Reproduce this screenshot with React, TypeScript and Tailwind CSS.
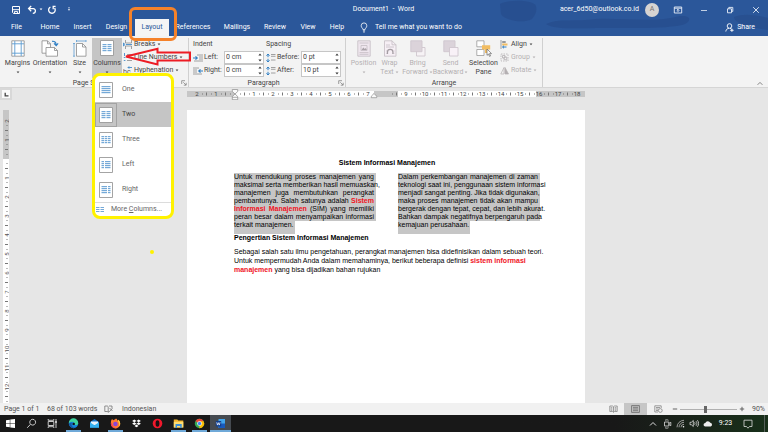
import { ReactNode } from "react";

const tabs = [
  { name: "File", width: "w-[33px]" },
  { name: "Home", width: "w-[34px]" },
  { name: "Insert", width: "w-[31px]" },
  { name: "Design", width: "w-[37px]" },
  { name: "Layout", width: "w-[34px]" },
  { name: "References", width: "w-[48px]" },
  { name: "Mailings", width: "w-[40px]" },
  { name: "Review", width: "w-[36px]" },
  { name: "View", width: "w-[30px]" },
  { name: "Help", width: "w-[28px]" },
];

const columnOptions = [
  { name: "One", cols: [[2.5, 9]] },
  { name: "Two", cols: [[2.5, 4], [7.5, 4]] },
  { name: "Three", cols: [[2.4, 2.6], [5.7, 2.6], [9, 2.6]] },
  { name: "Left", cols: [[2.5, 2.5], [6, 5.5]] },
  { name: "Right", cols: [[2.5, 5.5], [9, 2.5]] },
];

const leftColumn: ReactNode[] = [
  "Untuk mendukung proses manajemen yang",
  "maksimal serta memberikan hasil memuaskan,",
  "manajemen juga membutuhkan perangkat",
  <>
    pembantunya. Salah satunya adalah <Red>Sistem</Red>
  </>,
  <>
    <Red>Informasi Manajemen</Red> (SIM) yang memiliki
  </>,
  "peran besar dalam menyampaikan informasi",
];

const rightColumn: ReactNode[] = [
  "Dalam perkembangan manajemen di zaman",
  "teknologi saat ini, penggunaan sistem informasi",
  "menjadi sangat penting. Jika tidak digunakan,",
  "maka proses manajemen tidak akan mampu",
  "bergerak dengan tepat, cepat, dan lebih akurat.",
  "Bahkan dampak negatifnya berpengaruh pada",
];

function Red({ children }: { children: ReactNode }) {
  return <b className="text-[#f0141e]">{children}</b>;
}

function Caret() {
  return (
    <svg viewBox="0 0 4 3" className="inline-block w-[4px] h-[3px] shrink-0">
      <path d="M0.6 0.6h2.8L2 2.2z" fill="currentColor" />
    </svg>
  );
}

/* ---------- title bar ---------- */

function TitleBar() {
  return (
    <div className="relative flex items-center h-[19px] text-white">
      <div className="flex-1 flex items-center pl-[11px]">
        <button aria-label="Save" className="w-[10px]">
          <svg viewBox="0 0 10 10" className="w-[10px] h-[10px]" fill="none" stroke="#fff">
            <path d="M1.5 1.5h7v7h-6l-1-1z" />
            <path d="M2 4.7h6M3.4 8.5V6.6h3.2v1.9" />
          </svg>
        </button>
        <button aria-label="Undo" className="ml-[6px] w-[10px]">
          <svg viewBox="0 0 10 10" className="w-[10px] h-[10px]" fill="none" stroke="#fff" strokeWidth="1.3">
            <path d="M4.2 1 1.6 3.6l2.6 2.6M1.8 3.6h4.4c3 0 3 4.8-.4 4.8" />
          </svg>
        </button>
        <button aria-label="Undo history" className="ml-[2px] flex">
          <Caret />
        </button>
        <button aria-label="Redo" className="ml-[4px] w-[10px]">
          <svg viewBox="0 0 10 10" className="w-[10px] h-[10px]" fill="none" stroke="#fff" strokeWidth="1.3">
            <path d="M3.4 2A3.3 3.3 0 1 0 7.6 3M8.6 1.4H6.2v2.8" />
          </svg>
        </button>
        <button aria-label="Customize toolbar" className="ml-[10px] flex">
          <svg viewBox="0 0 4 5" className="w-[4px] h-[5px]">
            <path d="M1 .8h2" stroke="#fff" strokeWidth=".6" />
            <path d="M.8 2.2h2.400L2 3.800z" fill="#fff" />
          </svg>
        </button>
      </div>
      <h1 className="font-normal pr-[4px]">Document1&nbsp; -&nbsp; Word</h1>
      <div className="flex-1 flex items-center justify-end pr-[8px]">
        <span>acer_6d50@outlook.co.id</span>
        <span className="ml-[6px] w-[14px] h-[14px] rounded-full bg-[#d6d4d2] text-[#77726e] flex items-center justify-center">
          A
        </span>
        <button aria-label="Ribbon display options" className="ml-[14px]">
          <svg viewBox="0 0 10 8" className="w-[10px] h-[8px]" fill="none" stroke="#e8eef8" strokeWidth=".9">
            <path d="M1.3 1h7.4v6H1.3zM1.3 2.2h7.4M5 6V3.4M3.7 4.6 5 3.3l1.3 1.3" />
          </svg>
        </button>
        <button aria-label="Minimize" className="ml-[17px]">
          <svg viewBox="0 0 8 8" className="w-[8px] h-[8px]" stroke="#e8eef8" strokeWidth=".8">
            <path d="M1 4.5h6" />
          </svg>
        </button>
        <button aria-label="Restore" className="ml-[18px]">
          <svg viewBox="0 0 8 8" className="w-[8px] h-[8px]" fill="none" stroke="#e8eef8" strokeWidth=".9">
            <path d="M1.5 2.8h4v4h-4zM2.8 2.8V1.4h4v4H5.5" />
          </svg>
        </button>
        <button aria-label="Close" className="ml-[18px]">
          <svg viewBox="0 0 8 8" className="w-[8px] h-[8px]" stroke="#e8eef8" strokeWidth=".9">
            <path d="m1.2 1.2 5.6 5.6M6.8 1.2 1.2 6.8" />
          </svg>
        </button>
      </div>
    </div>
  );
}

function TabBar() {
  return (
    <div className="relative flex items-stretch h-[17px] text-white">
      {tabs.map((tab) => (
        <button
          key={tab.name}
          className={`${tab.width} shrink-0 text-center ${
            tab.name === "Layout" ? "bg-[#f5f5f5] text-[#2b579a]" : ""
          }`}
        >
          {tab.name}
        </button>
      ))}
      <label htmlFor="tell-me" className="flex items-center pl-[9px]">
        <svg viewBox="0 0 8 11" className="w-[8px] h-[11px]" fill="none" stroke="#fff" strokeWidth=".8">
          <path d="M2.8 7.4C2.6 6 1.2 5.6 1.2 3.7a2.8 2.8 0 0 1 5.6 0c0 1.900-1.400 2.300-1.600 3.700zM2.900 8.800h2.200M3.200 10h1.600" />
        </svg>
      </label>
      <input
        id="tell-me"
        className="ml-[7px] w-[120px] placeholder:text-white outline-none"
        placeholder="Tell me what you want to do"
      />
      <button className="ml-auto mr-[13px] flex items-center gap-[3px]">
        <svg viewBox="0 0 9 9" className="w-[9px] h-[9px]" fill="none" stroke="#fff" strokeWidth=".9">
          <circle cx="4.500" cy="3" r="2.300" />
          <path d="M.8 8.500c.3-2 1.500-3.100 3.200-3.300M5 5.200c1 .2 1.700.8 2 1.400M5.200 7.300h3.400M6.900 5.700v3.200" />
        </svg>
        Share
      </button>
    </div>
  );
}

/* ---------- ribbon ---------- */

function RibbonGroup({
  title,
  launcher,
  className,
  children,
}: {
  title: string;
  launcher?: boolean;
  className: string;
  children: ReactNode;
}) {
  return (
    <section className={`flex flex-col shrink-0 mt-[2px] border-r border-[#d0d0d0] ${className}`}>
      <div className="flex shrink-0 h-[40px]">{children}</div>
      <div className="flex shrink-0 items-center h-[10px] text-[#444]">
        <span className="flex-1 text-center">{title}</span>
        {launcher && (
          <button aria-label={`${title} settings`} className="mr-[1px]">
            <svg viewBox="0 0 6 6" className="w-[6px] h-[6px]" fill="none" stroke="#777" strokeWidth=".7">
              <path d="M.7 4V.7H4M2.300 2.300l2.600 2.600M5.200 2.800v2.400H2.800" />
            </svg>
          </button>
        )}
      </div>
    </section>
  );
}

function BigButton({
  lines,
  icon,
  className,
  caret = "none",
  disabled,
}: {
  lines: string[];
  icon: ReactNode;
  className: string;
  caret?: "below" | "inline" | "none";
  disabled?: boolean;
}) {
  return (
    <button
      disabled={disabled}
      className={`flex flex-col items-center shrink-0 pt-[2px] leading-[9px] whitespace-nowrap ${
        disabled ? "text-[#b4b0b2]" : "text-[#444]"
      } ${className}`}
    >
      <span className="h-[18px] mb-[1px]">{icon}</span>
      {lines.map((line, i) => (
        <span key={line} className="flex items-center gap-[1px]">
          {line}
          {caret === "inline" && i === lines.length - 1 && <Caret />}
        </span>
      ))}
      {caret === "below" && (
        <span className="flex items-center h-[8px]">
          <Caret />
        </span>
      )}
    </button>
  );
}

function SmallButton({ label, icon, disabled }: { label: string; icon: ReactNode; disabled?: boolean }) {
  return (
    <button
      disabled={disabled}
      className={`flex items-center h-[13px] gap-[2px] whitespace-nowrap ${disabled ? "text-[#b4b0b2]" : "text-[#444]"}`}
    >
      {icon}
      {label}
      <Caret />
    </button>
  );
}

function Field({
  id,
  label,
  value,
  icon,
  labelWidth,
}: {
  id: string;
  label: string;
  value: string;
  icon: ReactNode;
  labelWidth: string;
}) {
  return (
    <div className="flex items-center h-[13px] text-[#444]">
      {icon}
      <label htmlFor={id} className={`${labelWidth} pl-[1px] whitespace-nowrap`}>
        {label}
      </label>
      <div className="flex items-center w-[40px] h-[13px] bg-white border border-[#c6c6c6]">
        <input id={id} defaultValue={value} className="w-[33px] pl-[1px] outline-none" />
        <span className="flex flex-col gap-[3px]">
          <button aria-label={`Increase ${label}`} className="block">
            <svg viewBox="0 0 4 3" className="block w-[4px] h-[3px]">
              <path d="M0.400 2.500h3.200L2 .6z" fill="#333" />
            </svg>
          </button>
          <button aria-label={`Decrease ${label}`} className="block">
            <svg viewBox="0 0 4 3" className="block w-[4px] h-[3px]">
              <path d="M0.400 .5h3.200L2 2.400z" fill="#333" />
            </svg>
          </button>
        </span>
      </div>
    </div>
  );
}

function MarginsIcon() {
  return (
    <svg viewBox="0 0 14 17" className="w-[14px] h-[17px]" fill="none">
      <path d="M.8.8h12.400v15.400H.8z" fill="#fff" stroke="#8a8a8a" strokeWidth=".8" />
      <path d="M3.800 1v15M10.200 1v15M1 3.800h12M1 13.200h12" stroke="#5b9bd0" strokeWidth=".9" />
    </svg>
  );
}

function OrientationIcon() {
  return (
    <svg viewBox="0 0 18 17" className="w-[18px] h-[17px]" fill="none" stroke="#8a8a8a" strokeWidth=".8">
      <path d="M1 .8h5.500l3 3v9.400H1z" fill="#fff" />
      <path d="M6.500.8v3h3" />
      <path d="M5 7.500h8.500l3 3v5.700H5z" fill="#fff" />
      <path d="M13.500 7.500v3h3" />
      <path d="M11 1.300c2.500-.4 4 1 4.200 3.400M13 3.400l2.200 2.200 1.900-2.200" stroke="#2f7fc4" strokeWidth="1.200" />
    </svg>
  );
}

function SizeIcon() {
  return (
    <svg viewBox="0 0 14 17" className="w-[14px] h-[17px]" fill="none">
      <path d="M3.500 3.500h6l3.500 3.500v9.200H3.500z" fill="#fff" stroke="#8a8a8a" strokeWidth=".8" />
      <path d="M9.500 3.500V7H13" stroke="#8a8a8a" strokeWidth=".8" />
      <path d="M3.500 1h9.500M3.500 0v2M13 0v2M1 3.500v12.700M0 3.500h2M0 16.200h2" stroke="#5b9bd0" strokeWidth=".8" />
    </svg>
  );
}

function ColumnsIcon({ cols }: { cols: number[][] }) {
  return (
    <svg viewBox="0 0 14 16" className="w-[14px] h-[16px]">
      <path d="M.5.5h13v15H.5z" fill="#fff" stroke="#9a9a9a" strokeWidth=".9" />
      {[4, 6, 8, 10].map((y) =>
        cols.map(([x, w]) => <rect key={`${y}-${x}`} x={x} y={y} width={w} height="1.200" fill="#74a9d8" />)
      )}
    </svg>
  );
}

function PositionIcon() {
  return (
    <svg viewBox="0 0 14 17" className="w-[14px] h-[17px]" fill="#efe6ee" stroke="#c4bcc3" strokeWidth=".8">
      <path d="M.8.800h12.400v15.400H.8z" />
      <path d="M4 5.500h6v5H4zM2.500 3h9M2.500 12.600h9M2.500 14.300h9" />
      <path d="m4.500 10 1.800-2.500 1.500 1.500.9-1 1.200 2z" fill="#a9a1a8" stroke="none" />
    </svg>
  );
}

function WrapIcon() {
  return (
    <svg viewBox="0 0 14 17" className="w-[14px] h-[17px]" fill="none" stroke="#c4bcc3" strokeWidth=".8">
      <path d="M1.500.800h7.500l4 4v11.400H1.500z" fill="#f6eff5" />
      <path d="M9 .8v4h4M3 5h4M3 7h8M3 13.200h2M9.500 13.200h2M3 11h1M10.500 11h1" />
      <path d="M4.500 14v-2a2.700 2.700 0 0 1 5.400 0v2" stroke="#a39ca2" strokeWidth="1.200" />
    </svg>
  );
}

function ForwardIcon() {
  return (
    <svg viewBox="0 0 16 17" className="w-[16px] h-[17px]" stroke="#cfc6ce" strokeWidth=".9">
      <path d="M6.500 7.500h8.500v8.500H6.500z" fill="#f6f2f5" />
      <path d="M.8.800h11.200v10.900H.8z" fill="#dbd3da" />
    </svg>
  );
}

function BackwardIcon() {
  return (
    <svg viewBox="0 0 16 17" className="w-[16px] h-[17px]" stroke="#cfc6ce" strokeWidth=".9">
      <path d="M.8.800h11.200v10.900H.8z" fill="#dbd3da" />
      <path d="M6.500 7.500h8.500v8.500H6.500z" fill="#f8f1f7" />
    </svg>
  );
}

function SelectionIcon() {
  return (
    <svg viewBox="0 0 16 17" className="w-[16px] h-[17px]" stroke="#8e8e8e" strokeWidth=".7">
      <path d="M.8.800h7.200v6H.8zM.8 9.500h7.200v6H.8z" fill="#fff" />
      <path d="M6 5.300h8.200v4.200H11v3.500H9V9.500H6z" fill="#f2bd62" stroke="none" />
      <path d="M11 9v6.300l1.500-1.300 1 2.400 1-.4-1-2.400h2z" fill="#fff" stroke="#666" />
    </svg>
  );
}

function Ribbon() {
  return (
    <div className="relative flex h-[52px] bg-[#f3f3f3] border-b border-[#d5d5d5]">
      <RibbonGroup title="Page Setup" launcher className="w-[189px]">
        <BigButton lines={["Margins"]} icon={<MarginsIcon />} caret="below" className="ml-[2px] w-[31px]" />
        <BigButton lines={["Orientation"]} icon={<OrientationIcon />} caret="below" className="w-[34px]" />
        <BigButton lines={["Size"]} icon={<SizeIcon />} caret="below" className="w-[25px]" />
        <BigButton
          lines={["Columns"]}
          icon={<ColumnsIcon cols={[[2.5, 4], [7.5, 4]]} />}
          caret="below"
          className="w-[30px] bg-[#c5c5c5]"
        />
        <div className="ml-[1px] flex flex-col">
          <SmallButton
            label="Breaks"
            icon={
              <svg viewBox="0 0 9 9" className="w-[9px] h-[9px]" fill="none" stroke="#8a8a8a" strokeWidth=".8">
                <path d="M2.500 0v3h6V0M2.500 9V6h6v3" />
                <path d="M3 4.500h6M.5 3v3l1.600-1.500z" stroke="#2f7fc4" />
              </svg>
            }
          />
          <SmallButton
            label="Line Numbers"
            icon={
              <svg viewBox="0 0 9 9" className="w-[9px] h-[9px]" fill="none" stroke="#8a8a8a" strokeWidth=".8">
                <path d="M4 1.500h5M4 4.500h5M4 7.500h5" />
                <path d="M1.500 0v3M.8 4.500h1.600M.8 7.500h1.600" stroke="#2f7fc4" />
              </svg>
            }
          />
          <SmallButton
            label="Hyphenation"
            icon={
              <svg viewBox="0 0 9 9" className="w-[9px] h-[9px]">
                <text x="0" y="8" fontSize="7" fill="#555">
                  bc
                </text>
                <path d="M5 1.500h4M6.200 .3 5 1.500l1.200 1.200" stroke="#2f7fc4" strokeWidth=".8" fill="none" />
              </svg>
            }
          />
        </div>
      </RibbonGroup>

      <RibbonGroup title="Paragraph" launcher className="w-[157px]">
        <div className="flex flex-col pl-[4px] w-[77px]">
          <span className="h-[13px] leading-[13px] text-[#444]">Indent</span>
          <Field
            id="indent-left"
            label="Left:"
            value="0 cm"
            labelWidth="w-[21px]"
            icon={
              <svg viewBox="0 0 10 8" className="w-[10px] h-[8px]" fill="none" stroke="#8a8a8a" strokeWidth=".8">
                <path d="M4 1h6M6 3h4M6 5h4M1 7h9" />
                <path d="M0 4h4M2.500 2.300 4.300 4 2.500 5.700" stroke="#2f7fc4" strokeWidth="1.100" />
              </svg>
            }
          />
          <Field
            id="indent-right"
            label="Right:"
            value="0 cm"
            labelWidth="w-[21px]"
            icon={
              <svg viewBox="0 0 10 8" className="w-[10px] h-[8px]" fill="none" stroke="#8a8a8a" strokeWidth=".8">
                <path d="M0 1h6M0 3h4M0 5h4M0 7h9" />
                <path d="M10 4H6M7.500 2.300 5.700 4l1.800 1.700" stroke="#2f7fc4" strokeWidth="1.100" />
              </svg>
            }
          />
        </div>
        <div className="flex flex-col">
          <span className="h-[13px] leading-[13px] text-[#444]">Spacing</span>
          {[
            { id: "space-before", label: "Before:", value: "0 pt" },
            { id: "space-after", label: "After:", value: "10 pt" },
          ].map((field) => (
            <Field
              key={field.id}
              {...field}
              labelWidth="w-[25px]"
              icon={
                <svg viewBox="0 0 10 10" className="w-[10px] h-[10px]" fill="none" stroke="#8a8a8a" strokeWidth=".8">
                  <path d="M5 1.500h4.500M5 3.300h4.500M5 7h4.500" />
                  <path d="M2 1v3.200M2 5.800V9M.5 2.700 2 1l1.500 1.700M.5 7.300 2 9l1.500-1.700" stroke="#2f7fc4" strokeWidth="1" />
                </svg>
              }
            />
          ))}
        </div>
      </RibbonGroup>

      <RibbonGroup title="Arrange" className="w-[197px]">
        <BigButton lines={["Position"]} icon={<PositionIcon />} caret="below" disabled className="ml-[4px] w-[27px]" />
        <BigButton lines={["Wrap", "Text"]} icon={<WrapIcon />} caret="inline" disabled className="w-[25px]" />
        <BigButton lines={["Bring", "Forward"]} icon={<ForwardIcon />} caret="inline" disabled className="w-[31px]" />
        <BigButton lines={["Send", "Backward"]} icon={<BackwardIcon />} caret="inline" disabled className="w-[35px]" />
        <BigButton lines={["Selection", "Pane"]} icon={<SelectionIcon />} className="w-[31px]" />
        <div className="ml-[1px] flex flex-col">
          <SmallButton
            label="Align"
            icon={
              <svg viewBox="0 0 9 9" className="w-[9px] h-[9px]">
                <path d="M1 0v9" stroke="#8a8a8a" strokeWidth=".8" />
                <path d="M2.200 1h3.500v2H2.200z" fill="#9a9a9a" />
                <path d="M2.200 3.500H7.500v2H2.200z" fill="#f2bd62" />
                <path d="M6.500 7H2.500M4 5.700 2.600 7 4 8.300" stroke="#2f7fc4" fill="none" />
              </svg>
            }
          />
          <SmallButton
            label="Group"
            disabled
            icon={
              <svg viewBox="0 0 9 9" className="w-[9px] h-[9px]" fill="none" stroke="#b4b0b2" strokeWidth=".8">
                <path d="M1 1h7v7H1z" strokeDasharray="1.500 1" />
                <path d="M2.500 2.500H5V5H2.500zM4 4h2.700v2.700H4z" />
              </svg>
            }
          />
          <SmallButton
            label="Rotate"
            disabled
            icon={
              <svg viewBox="0 0 9 9" className="w-[9px] h-[9px]" stroke="#b4b0b2" strokeWidth=".7">
                <path d="M4 1.500V8H.8z" fill="none" />
                <path d="M5 1.500V8h3.500z" fill="#b4b0b2" />
              </svg>
            }
          />
        </div>
      </RibbonGroup>

      <button aria-label="Collapse the ribbon" className="ml-auto mr-[5px] self-end mb-[1px]">
        <svg viewBox="0 0 6 5" className="w-[6px] h-[5px]" fill="none" stroke="#777" strokeWidth=".9">
          <path d="M.6 3.800 3 1.400l2.400 2.400" />
        </svg>
      </button>

      <ColumnsMenu />
    </div>
  );
}

function ColumnsMenu() {
  return (
    <div className="absolute z-10 left-[92px] top-[37px] w-[82px] pt-[1px] bg-white rounded-[8px] border-[3px] border-[#fff200] overflow-hidden text-[#666]">
      {columnOptions.map((option) => (
        <button
          key={option.name}
          className={`flex items-center w-full h-[25px] text-left ${
            option.name === "Two" ? "bg-[#c5c5c5] text-[#444]" : ""
          }`}
        >
          <span
            className={`flex items-center justify-center w-[22px] h-[24px] ${
              option.name === "Two" ? "border border-[#a3a3a3]" : ""
            }`}
          >
            <ColumnsIcon cols={option.cols} />
          </span>
          <span className="ml-[5px]">{option.name}</span>
        </button>
      ))}
      <button className="flex items-center w-full h-[14px] border-t border-[#dcdcdc] whitespace-nowrap">
        <svg viewBox="0 0 8 8" className="ml-[1px] w-[8px] h-[8px]" stroke="#74a9d8" strokeWidth="1">
          <path d="M0 1.500h3.500M0 3.500h3.500M0 5.500h3.500M4.500 1.500H8M4.500 3.500H8M4.500 5.500H8" />
        </svg>
        <span className="ml-[7px]">
          More <u>C</u>olumns...
        </span>
      </button>
    </div>
  );
}

/* ---------- document ---------- */

const CM = 19;

function HorizontalRuler() {
  const zero = 48;
  const labels = [-2, -1, 1, 2, 3, 4, 5, 6, 7, 9, 10, 11, 12, 13, 14, 15, 16, 17, 18];
  const cells = Array.from({ length: 21 }, (_, i) => i - 2);
  return (
    <svg viewBox="0 0 398 12" className="w-[398px] h-[12px]">
      <rect x="0" y="3" width="398" height="6" fill="#c6c6c6" />
      <rect x={zero} y="3" width="139" height="6" fill="#fff" />
      <rect x="211" y="3" width="138" height="6" fill="#fff" />
      {labels.map((n) => (
        <text key={n} x={zero + n * CM} y="8" fontSize="6" textAnchor="middle" fill="#444">
          {Math.abs(n)}
        </text>
      ))}
      {cells.map((n) => {
        const x = zero + n * CM;
        if (n === 7 || n === 18) return null;
        return (
          <g key={n} fill="#777">
            <rect x={x + 5} y="5.500" width="1" height="1" />
            <rect x={x + 9} y="4.500" width="1" height="3" />
            <rect x={x + 14} y="5.500" width="1" height="1" />
          </g>
        );
      })}
      <g fill="#fafafa" stroke="#8a8a8a" strokeWidth=".7">
        <path d="M45.300 1.500h5.400v2L48 6l-2.700-2.500zM48 6l2.700 2.500v3.200h-5.400V8.500zM45.300 9.300h5.400" />
        <path d="m187 5.500 2.700 2.700v1.500h-5.400V8.200z" />
      </g>
    </svg>
  );
}

function VerticalRuler() {
  const zero = 49;
  const cells = Array.from({ length: 15 }, (_, i) => i - 2);
  return (
    <svg viewBox="0 0 6 293" className="ml-[3px] w-[6px] h-[293px] shrink-0">
      <rect width="6" height="293" fill="#fff" />
      <rect width="6" height={zero} fill="#c6c6c6" />
      {cells.map((n) => {
        const y = zero + n * CM;
        return (
          <g key={n} fill="#777">
            {n !== 0 && (
              <text x="0" y="0" transform={`translate(5.500 ${y}) rotate(-90)`} fontSize="6" textAnchor="middle" fill="#555">
                {Math.abs(n)}
              </text>
            )}
            <rect x="3.500" y={y + 4} width="1" height="1" />
            <rect x="2" y={y + 9} width="3" height="1" />
            <rect x="3.500" y={y + 14} width="1" height="1" />
          </g>
        );
      })}
    </svg>
  );
}

function SelectedColumn({ lines, last, lastWidth }: { lines: ReactNode[]; last: string; lastWidth: string }) {
  return (
    <div className="w-[142px] leading-[8px]">
      <div className="bg-[#c6c6c6] pr-[2px]">
        {lines.map((line, i) => (
          <div key={i} className="h-[8px] whitespace-nowrap [text-align-last:justify]">
            {line}
          </div>
        ))}
      </div>
      <div className={`${lastWidth} h-[13px] bg-[#c6c6c6] whitespace-nowrap`}>{last}</div>
    </div>
  );
}

function DocumentPage() {
  return (
    <article className="w-[398px] bg-white pt-[48px] pl-[47px] pr-[45px] font-['Liberation_Sans',Arial,sans-serif] text-[7px] text-black">
      <h2 className="text-center font-bold leading-[9px]">Sistem Informasi Manajemen</h2>
      <div className="mt-[6px] flex justify-between">
        <SelectedColumn lines={leftColumn} last="terkait manajemen." lastWidth="w-[61px]" />
        <SelectedColumn lines={rightColumn} last="kemajuan perusahaan." lastWidth="w-[72px]" />
      </div>
      <h3 className="font-bold leading-[8px]">Pengertian Sistem Informasi Manajemen</h3>
      <p className="mt-[5px] leading-[9px] whitespace-nowrap">
        Sebagai salah satu ilmu pengetahuan, perangkat manajemen bisa didefinisikan dalam sebuah teori.
        <br />
        Untuk mempermudah Anda dalam memahaminya, berikut beberapa definisi <Red>sistem informasi</Red>
        <br />
        <Red>manajemen</Red> yang bisa dijadikan bahan rujukan
      </p>
    </article>
  );
}

function Workspace() {
  return (
    <main className="flex-1 min-h-0 flex flex-col bg-[#e6e6e6] overflow-hidden">
      <div className="flex h-[22px] shrink-0 items-start">
        <button
          aria-label="Tab selector"
          className="w-[12px] h-[12px] border-2 border-[#d8d8d8] bg-[#fafafa] flex items-center justify-center"
        >
          <svg viewBox="0 0 5 5" className="w-[5px] h-[5px]" fill="none" stroke="#444" strokeWidth="1.300">
            <path d="M1.200 .8v3h3.300" />
          </svg>
        </button>
        <div className="flex-1 flex justify-center pr-[8px]">
          <HorizontalRuler />
        </div>
      </div>
      <div className="flex flex-1 min-h-0">
        <VerticalRuler />
        <div className="flex-1 flex justify-center pr-[5px]">
          <DocumentPage />
        </div>
      </div>
    </main>
  );
}

/* ---------- status bar ---------- */

function StatusBar() {
  return (
    <footer className="flex items-center h-[12px] shrink-0 bg-[#f1f1f1] text-[#555]">
      <span className="pl-[4px] w-[47px]">Page 1 of 1</span>
      <span className="w-[57px]">68 of 103 words</span>
      <button aria-label="Proofing" className="w-[18px]">
        <svg viewBox="0 0 9 8" className="w-[9px] h-[8px]" fill="none" stroke="#666" strokeWidth=".7">
          <path d="M4 1.500 3.300 1H.8v5.500h2.500l.9.700.9-.7h.7M4.200 1.500v5.700M5 1h3v2.500M5.500 3l3 3M8.300 3.500 5.800 6.200" />
        </svg>
      </button>
      <button>Indonesian</button>
      <div className="ml-auto flex items-center h-full">
        <button aria-label="Read mode" className="w-[22px] flex justify-center">
          <svg viewBox="0 0 9 8" className="w-[9px] h-[8px]" fill="none" stroke="#777" strokeWidth=".7">
            <path d="M4.500 1.800 3.500 1H.8v5.500h2.700l1 .7 1-.7h2.700V1H5.500zv5.400M1.800 2.700h1.500M1.800 4h1.500M1.800 5.300h1.500M5.700 2.700h1.500M5.700 4h1.500M5.700 5.300h1.500" />
          </svg>
        </button>
        <button aria-label="Print layout" className="w-[23px] h-full bg-[#c6c6c6] flex items-center justify-center">
          <svg viewBox="0 0 9 8" className="w-[9px] h-[8px]" fill="none" stroke="#666" strokeWidth=".8">
            <path d="M.6.600h7.800v6.800H.6zM2 2.300h5M2 4h5M2 5.700h5" />
          </svg>
        </button>
        <button aria-label="Web layout" className="w-[22px] flex justify-center">
          <svg viewBox="0 0 9 8" className="w-[9px] h-[8px]" fill="none" stroke="#777" strokeWidth=".7">
            <path d="M4 7H.8V.800h6.400V3M2 2.500h4M2 4h2.500M2 5.500h2" />
            <circle cx="6.300" cy="5.500" r="1.900" />
          </svg>
        </button>
        <button aria-label="Zoom out" className="w-[11px] pl-[3px]">
          <svg viewBox="0 0 6 6" className="w-[6px] h-[6px]" stroke="#555" strokeWidth=".9">
            <path d="M.8 3h4.400" />
          </svg>
        </button>
        <input
          type="range"
          aria-label="Zoom"
          min={10}
          max={190}
          defaultValue={90}
          className="w-[57px] h-[8px] appearance-none bg-transparent [&::-webkit-slider-runnable-track]:h-px [&::-webkit-slider-runnable-track]:bg-[#b0b0b0] [&::-webkit-slider-thumb]:appearance-none [&::-webkit-slider-thumb]:w-[3px] [&::-webkit-slider-thumb]:h-[7px] [&::-webkit-slider-thumb]:-mt-[3px] [&::-webkit-slider-thumb]:bg-[#666]"
        />
        <button aria-label="Zoom in" className="w-[12px] pl-[2px]">
          <svg viewBox="0 0 6 6" className="w-[6px] h-[6px]" stroke="#555" strokeWidth=".9">
            <path d="M.8 3h4.400M3 .8v4.400" />
          </svg>
        </button>
        <button className="w-[19px] text-center">90%</button>
      </div>
    </footer>
  );
}

/* ---------- taskbar ---------- */

const apps = [
  {
    name: "Start",
    icon: <path d="M1 2.300 4.800 1.700v3.500H1zM5.300 1.600 10 1v4.200H5.300zM1 5.700h3.800v3.600L1 8.700zM5.300 5.700H10V10l-4.700-.6z" fill="#fff" />,
  },
  {
    name: "Search",
    icon: <path d="M6.700 1.300a2.900 2.900 0 1 1-.01 0zM4.500 6.300 1.200 9.800" fill="none" stroke="#ddd" strokeWidth=".9" />,
  },
  {
    name: "Task view",
    icon: (
      <g fill="none" stroke="#ddd" strokeWidth=".9">
        <path d="M1.200 3.500h5.600v4H1.200zM1.200 1v1.300h5.600V1M1.200 10V8.700h5.600V10M9 1v9" />
        <path d="M8 3.200h2v1.500H8z" fill="#ddd" stroke="none" />
      </g>
    ),
  },
  {
    name: "Edge",
    running: true,
    icon: (
      <g>
        <circle cx="5.500" cy="5.500" r="4.700" fill="#1683d8" />
        <path d="M.8 5A4.700 4.700 0 0 1 10.200 5c.1 1.600-1.400 2.300-3.200 2C7.500 4 4 2.600.8 5z" fill="#3fd39c" />
        <path d="M4 5c-1.400 2 .3 4.800 3.300 4.800-3.600 1.300-6-1.300-6.400-4C2 4.600 3.200 4.400 4 5z" fill="#0f57a8" />
        <circle cx="5.700" cy="5.900" r="1.200" fill="#111" />
      </g>
    ),
  },
  {
    name: "Mail",
    icon: (
      <g>
        <path d="M1 4 5.500 1 10 4v5.500H1z" fill="#1272c8" />
        <path d="M2 3.500h7V7H2z" fill="#e8f4fd" />
        <path d="m1 4.300 4.500 2.900L10 4.300v5.400H1z" fill="#35b0ef" />
      </g>
    ),
  },
  {
    name: "Firefox",
    running: true,
    icon: (
      <g>
        <path d="M1 3c.2-.9.7-1.500 1.300-2 .1.700.5 1.100 1 1.300C4.500 1.600 5.300 1.500 6 .5c1.200.8 1.500 1.500 1.700 2.200.4-.1.500-.5.500-1 1.400 1 2 2.500 2 4A4.700 4.700 0 0 1 .8 5.800z" fill="#ff7a2f" />
        <path d="M7.700 2.700c.4-.1.500-.5.500-1 1.400 1 2 2.500 2 4a4 4 0 0 1-1 2.900C9.500 6 9 4.300 7.700 2.700z" fill="#ffd23c" />
        <circle cx="5.400" cy="6" r="2.300" fill="#8b45d6" />
        <path d="M.8 5.800A4.700 4.700 0 0 0 7 10c-3 .2-5-1.700-5.200-5z" fill="#f4305a" />
      </g>
    ),
  },
  {
    name: "Dropbox",
    icon: (
      <path d="m3.300 1.500 2.200 1.400-2.200 1.400-2.200-1.400zM7.700 1.500l2.200 1.400-2.200 1.400-2.200-1.400zM3.300 4.300l2.200 1.400-2.200 1.400-2.200-1.400zM7.700 4.300l2.200 1.400-2.200 1.400-2.200-1.400zM5.500 6.600l2 1.300-2 1.300-2-1.300z" fill="#fff" />
    ),
  },
  {
    name: "Opera",
    icon: (
      <g>
        <circle cx="5.500" cy="5.500" r="4.800" fill="#f0182c" />
        <ellipse cx="5.500" cy="5.500" rx="1.900" ry="3.300" fill="#1a1112" />
      </g>
    ),
  },
  {
    name: "File Explorer",
    running: true,
    icon: (
      <g>
        <path d="M.8 1.500h3.500l1 1h5v7H.8z" fill="#f3b52e" />
        <path d="M.8 3.800h9.500v5.700H.8z" fill="#ffdd73" />
        <path d="M2.500 6h6.200v4H7.200V8H4v2H2.500z" fill="#3b8fd9" />
      </g>
    ),
  },
  {
    name: "Chrome",
    running: true,
    icon: (
      <g>
        <circle cx="5.500" cy="5.500" r="4.700" fill="#34a853" />
        <path d="M5.500 5.500 1.400 3.200A4.700 4.700 0 0 1 9.600 3.200z" fill="#ea4335" />
        <path d="M5.500 5.500V3.200h4.100a4.700 4.700 0 0 1-4.300 7z" fill="#fbbc05" />
        <circle cx="5.500" cy="5.500" r="2.300" fill="#fff" />
        <circle cx="5.500" cy="5.500" r="1.700" fill="#4285f4" />
      </g>
    ),
  },
  {
    name: "Word",
    running: true,
    active: true,
    icon: (
      <g>
        <path d="M3.500 1H10v9H3.500z" fill="#41a5ee" />
        <path d="M3.500 5.500H10V10H3.500z" fill="#185abd" />
        <path d="M.8 3h5.400v5.400H.8z" fill="#103f91" />
        <path d="m1.700 4.300.8 2.800.9-2.400.9 2.400.8-2.800" stroke="#fff" strokeWidth=".7" fill="none" />
      </g>
    ),
  },
];

function Taskbar() {
  return (
    <nav className="flex items-stretch h-[17px] shrink-0 bg-gradient-to-r from-[#181818] from-80% to-[#18301a] text-white">
      {apps.map((app) => (
        <button
          key={app.name}
          aria-label={app.name}
          className={`flex flex-col items-center justify-between w-[21px] pt-[3px] ${app.active ? "bg-[#454a50]" : ""}`}
        >
          <svg viewBox="0 0 11 11" className="w-[11px] h-[11px]">
            {app.icon}
          </svg>
          <span className={`h-[2px] ${app.active ? "w-full" : "w-[15px]"} ${app.running ? "bg-[#6fa9d8]" : ""}`} />
        </button>
      ))}
      <div className="ml-auto flex items-center">
        <button aria-label="Show hidden icons" className="w-[14px] flex justify-center">
          <svg viewBox="0 0 8 6" className="w-[8px] h-[6px]" fill="none" stroke="#ddd" strokeWidth="1">
            <path d="M1 4.500 4 1.500l3 3" />
          </svg>
        </button>
        <button aria-label="Meet now" className="w-[14px] flex justify-center">
          <svg viewBox="0 0 9 10" className="w-[9px] h-[10px]" fill="none" stroke="#ddd" strokeWidth=".8">
            <path d="M1.500 3h4.300v4H1.500zM5.800 4.500 7.800 3.300v3.400L5.800 5.500M2 1.300c1-.6 2.500-.6 3.500 0M2 8.700c1 .6 2.500.6 3.500 0" />
          </svg>
        </button>
        <button aria-label="Network" className="w-[13px] flex justify-center">
          <svg viewBox="0 0 9 9" className="w-[9px] h-[9px]" fill="none" stroke="#aaa" strokeWidth=".9">
            <path d="M1 8.300A7 7 0 0 1 8 1.300M3 8.300a5 5 0 0 1 5-5M5 8.300a3 3 0 0 1 3-3" />
            <circle cx="7.500" cy="7.800" r=".8" fill="#fff" stroke="none" />
          </svg>
        </button>
        <button aria-label="Volume" className="w-[13px] flex justify-center">
          <svg viewBox="0 0 10 9" className="w-[10px] h-[9px]" fill="none" stroke="#ddd" strokeWidth=".8">
            <path d="M1 3.300h1.300L4.300 1.500v6L2.300 5.700H1zM5.500 3.200c.7.800.7 1.800 0 2.600M7 2.200c1.200 1.400 1.200 3.200 0 4.600M8.400 1.200c1.600 2 1.600 4.600 0 6.600" />
          </svg>
        </button>
        <button aria-label="OneDrive" className="w-[15px] flex justify-center">
          <svg viewBox="0 0 10 7" className="w-[10px] h-[7px]">
            <path d="M2.300 6.500a1.700 1.700 0 0 1 0-3.500 2.700 2.700 0 0 1 5-.2 1.900 1.900 0 0 1 .4 3.700z" fill="#eee" />
          </svg>
        </button>
        <time className="w-[21px] text-center">9:23</time>
        <button aria-label="Notifications" className="w-[23px] flex justify-center">
          <svg viewBox="0 0 10 10" className="w-[10px] h-[10px]" fill="none" stroke="#ddd" strokeWidth=".8">
            <path d="M1 1.200h8v6.300H6.500L5 9.200 3.500 7.500H1z" />
          </svg>
        </button>
        <span className="ml-[5px] w-[4px] h-[17px] border-l border-[#55605a]" />
      </div>
    </nav>
  );
}

export default function App() {
  return (
    <div className="relative h-screen flex flex-col overflow-hidden font-[Roboto,'Segoe_UI',sans-serif] text-[7px] leading-[9px]">
      <header className="relative shrink-0 bg-[#2b579a]">
        <svg viewBox="0 0 280 36" className="absolute right-0 top-0 w-[280px] h-[36px]" fill="#264b8b">
          <path d="M12 4c8-5 34-4 36 2 1 5 0 8-4 13-9 5-28 1-31-5z" opacity=".7" />
          <path d="M58 24c12-6 30-2 50-5 30-1 60 4 84-3 12-1 12 6 2 9-20 4-50 3-80 3-22 0-48 2-56-4z" opacity=".7" />
          <path d="M246 17c10-4 22-2 34 1v12c-14-2-34-6-34-13z" opacity=".6" />
        </svg>
        <TitleBar />
        <TabBar />
      </header>
      <Ribbon />
      <Workspace />
      <StatusBar />
      <Taskbar />

      {/* hand-drawn marks over the window */}
      <span className="absolute left-[129px] top-[7px] w-[48px] h-[34px] rounded-[6px] border-[3px] border-[#f5822a] pointer-events-none" />
      <svg
        viewBox="0 0 70 20"
        className="absolute left-[123px] top-[46px] w-[70px] h-[20px] pointer-events-none"
        fill="none"
        stroke="#ed1c24"
        strokeWidth="2"
      >
        <path d="M3 10.500 34.500 2.800V6.500H67V14.500H34.500v4z" />
      </svg>
      <span className="absolute left-[150px] top-[250px] w-[4px] h-[4px] rounded-full bg-[#fff200] pointer-events-none" />
    </div>
  );
}
